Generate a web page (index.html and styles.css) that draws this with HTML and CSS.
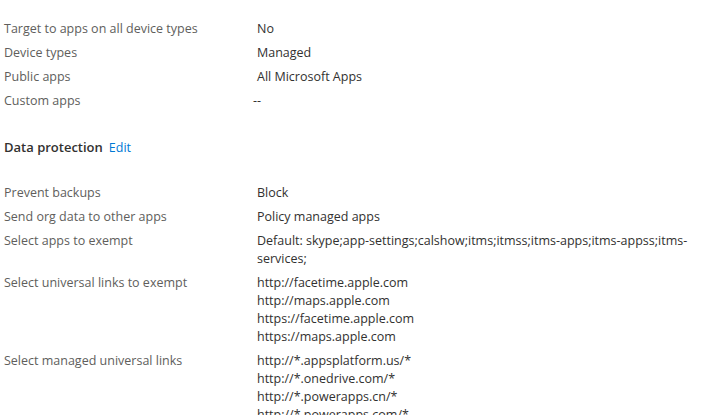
FILE: index.html
```html
<!DOCTYPE html>
<html lang="en">
<head>
<meta charset="utf-8">
<link rel="stylesheet" href="styles.css">
</head>
<body>
<div class="page">
  <dl class="props">
    <dt>Target to apps on all device types</dt><dd>No</dd>
    <dt>Device types</dt><dd>Managed</dd>
    <dt>Public apps</dt><dd>All Microsoft Apps</dd>
    <dt>Custom apps</dt><dd class="empty">--</dd>
  </dl>
  <div class="section-head">
    <span class="section-title">Data protection</span>
    <a class="edit" href="#">Edit</a>
  </div>
  <dl class="props">
    <dt>Prevent backups</dt><dd>Block</dd>
    <dt>Send org data to other apps</dt><dd>Policy managed apps</dd>
    <dt>Select apps to exempt</dt><dd class="wrap">Default: skype;app-settings;calshow;itms;itmss;itms-apps;itms-appss;itms-services;</dd>
    <dt>Select universal links to exempt</dt>
    <dd>http://facetime.apple.com<br>http://maps.apple.com<br>https://facetime.apple.com<br>https://maps.apple.com</dd>
    <dt>Select managed universal links</dt>
    <dd>http://*.appsplatform.us/*<br>http://*.onedrive.com/*<br>http://*.powerapps.cn/*<br>http://*.powerapps.com/*</dd>
  </dl>
</div>
</body>
</html>
```

FILE: styles.css
```css
html, body {
  margin: 0;
  padding: 0;
  background: #ffffff;
  overflow: hidden;
}
body {
  font-family: "Open Sans", "Noto Sans", sans-serif;
  font-size: 12.5px;
  line-height: 18px;
  color: #323130;
}
.page {
  padding: 20px 0 0 4px;
}
.props {
  display: grid;
  grid-template-columns: 253px 445px;
  row-gap: 6px;
  margin: 0;
}
.props dt {
  color: #605e5c;
  margin: 0;
}
.props dd {
  margin: 0;
  color: #323130;
}
.props dd.empty {
  margin-left: -4px;
}
.section-head {
  display: flex;
  align-items: baseline;
  gap: 6px;
  margin: 27px 0 26px;
  line-height: 20px;
}
.section-title {
  font-size: 13px;
  font-weight: 600;
  color: #323130;
}
.edit {
  color: #0078d4;
  text-decoration: none;
  font-size: 12.5px;
}
```
